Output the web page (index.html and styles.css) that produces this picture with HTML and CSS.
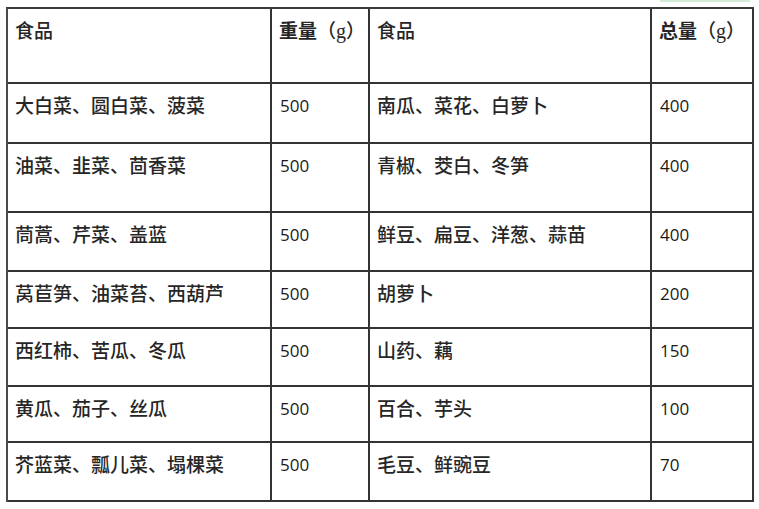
FILE: index.html
```html
<!DOCTYPE html>
<html lang="zh-CN">
<head>
<meta charset="utf-8">
<title>蔬菜重量表</title>
<link rel="stylesheet" href="styles.css">
</head>
<body>
<div class="page">
  <div class="green-mark"></div>
  <table class="food">
    <colgroup>
      <col class="c1"><col class="c2"><col class="c3"><col class="c4">
    </colgroup>
    <tr class="h0">
      <td>食品</td>
      <td><span class="hd">重量</span><span class="par">（<span class="g">g</span>）</span></td>
      <td>食品</td>
      <td><span class="hd">总量</span><span class="par">（<span class="g">g</span>）</span></td>
    </tr>
    <tr class="h1"><td>大白菜、圆白菜、菠菜</td><td class="num">500</td><td>南瓜、菜花、白萝卜</td><td class="num">400</td></tr>
    <tr class="h2"><td>油菜、韭菜、茴香菜</td><td class="num">500</td><td>青椒、茭白、冬笋</td><td class="num">400</td></tr>
    <tr class="h3"><td>茼蒿、芹菜、盖蓝</td><td class="num">500</td><td>鲜豆、扁豆、洋葱、蒜苗</td><td class="num">400</td></tr>
    <tr class="h4"><td>莴苣笋、油菜苔、西葫芦</td><td class="num">500</td><td>胡萝卜</td><td class="num">200</td></tr>
    <tr class="h5"><td>西红柿、苦瓜、冬瓜</td><td class="num">500</td><td>山药、藕</td><td class="num">150</td></tr>
    <tr class="h6"><td>黄瓜、茄子、丝瓜</td><td class="num">500</td><td>百合、芋头</td><td class="num">100</td></tr>
    <tr class="h7"><td>芥蓝菜、瓢儿菜、塌棵菜</td><td class="num">500</td><td>毛豆、鲜豌豆</td><td class="num">70</td></tr>
  </table>
</div>
</body>
</html>
```

FILE: styles.css
```css
html, body {
  margin: 0;
  padding: 0;
  background: #ffffff;
}
.page {
  position: relative;
  width: 759px;
  height: 509px;
  padding: 7px 0 0 6px;
  box-sizing: border-box;
}
.green-mark {
  position: absolute;
  left: 660px;
  top: 0;
  width: 90px;
  height: 2px;
  background: #d3ecd5;
}
.food {
  box-sizing: border-box;
  width: 748px;
  table-layout: fixed;
  border-collapse: separate;
  border-spacing: 0;
  border-top: 2px solid #3a3a3a;
  border-left: 2px solid #4a4a4a;
  font-family: "Noto Sans CJK SC", "Noto Sans", sans-serif;
  font-size: 19px;
  font-weight: 500;
  line-height: 23px;
  color: #262626;
}
.c1 { width: 264px; }
.c2 { width: 98px; }
.c3 { width: 282px; }
.c4 { width: 102px; }
.food td {
  vertical-align: top;
  padding: 9px 6px 0 7px;
  border-right: 2px solid #333333;
  border-bottom: 2px solid #333333;
  white-space: nowrap;
  overflow: hidden;
}
.food td.num {
  font-family: "Open Sans", "Liberation Sans", sans-serif;
  font-size: 17px;
  font-weight: 500;
  color: #1a1a1a;
  padding-left: 8px;
  padding-top: 10px;
}
.hd {
  font-weight: 700;
}
.par {
  font-family: "Noto Sans CJK SC", sans-serif;
}
.g {
  font-family: "Liberation Serif", serif;
  font-size: 20px;
}
.h0 { height: 75px; }
.h1 { height: 60px; }
.h2 { height: 69px; }
.h3 { height: 59px; }
.h4 { height: 57px; }
.h5 { height: 58px; }
.h6 { height: 56px; }
.h7 { height: 59px; }
```
